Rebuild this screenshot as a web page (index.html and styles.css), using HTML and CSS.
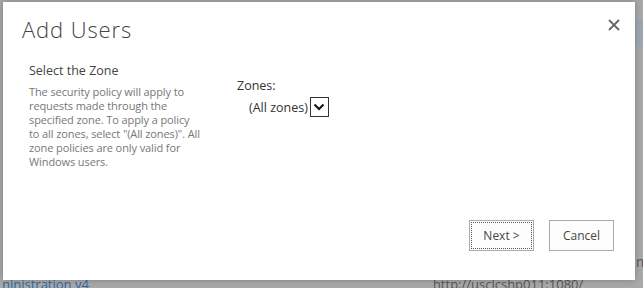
FILE: index.html
```html
<!DOCTYPE html>
<html>
<head>
<meta charset="utf-8">
<link rel="stylesheet" href="styles.css">
</head>
<body>
<div class="page">
  <div class="band"></div>
  <div class="dialog">
    <div class="titlebar">
      <h1 class="title">Add Users</h1>
      <svg class="close" width="12" height="12" viewBox="0 0 12 12"><path d="M1 1L11 11M11 1L1 11" stroke="#666" stroke-width="1.8"/></svg>
    </div>
    <div class="body">
      <div class="section">
        <div class="heading">Select the Zone</div>
        <div class="desc">The security policy will apply to<br>requests made through the<br>specified zone. To apply a policy<br>to all zones, select "(All zones)". All<br>zone policies are only valid for<br>Windows users.</div>
      </div>
      <div class="field">
        <div class="label">Zones:</div>
        <div class="select"><span>(All zones)</span><span class="arrow"><svg width="12" height="8" viewBox="0 0 12 8"><path d="M1.5 1.5L6 6L10.5 1.5" fill="none" stroke="#111" stroke-width="2"/></svg></span></div>
      </div>
    </div>
    <div class="buttons">
      <button class="btn focus">Next &gt;</button>
      <button class="btn">Cancel</button>
    </div>
  </div>
  <div class="under">
    <span class="link">ninistration v4</span>
    <span class="url">http://usclcshp011:1080/</span>
  </div>
  <span class="side">m</span>
</div>
</body>
</html>
```
FILE: styles.css
```css
html, body { margin: 0; padding: 0; }
body {
  width: 643px; height: 288px; overflow: hidden;
  background: #a8a8a8;
  font-family: "Open Sans", "Noto Sans", sans-serif;
}
.page { position: relative; width: 643px; height: 288px; padding-top: 2px; box-sizing: border-box; }
.band { position: absolute; right: 0; top: 20px; width: 8px; height: 26px; background: #9aa7b1; }
.side { position: absolute; left: 636px; top: 252px; font-size: 14px; color: #555; }
.dialog {
  position: relative; z-index: 2;
  margin-left: 3px; width: 632px; height: 278px;
  background: #fff;
  box-shadow: 0 0 6px rgba(0,0,0,0.25);
  display: flex; flex-direction: column;
  box-sizing: border-box;
}
.titlebar { display: flex; justify-content: space-between; align-items: flex-start; padding: 12px 15px 0 19px; height: 44px; box-sizing: border-box; }
.title { margin: 0; font-weight: 300; font-size: 22px; color: #444; line-height: 30px; letter-spacing: 0.9px; }
.close { margin-top: 5px; }
.body { display: flex; padding: 16px 0 0 26px; flex: 1; }
.section { width: 182px; }
.heading { font-size: 12.5px; color: #444; line-height: 17px; }
.desc { margin-top: 6px; font-size: 11px; color: #777; line-height: 14px; white-space: nowrap; letter-spacing: -0.1px; }
.field { margin-left: 26px; padding-top: 15px; }
.label { font-size: 12.5px; color: #333; line-height: 17px; }
.select { display: flex; align-items: center; margin: 3px 0 0 12px; font-size: 12.5px; color: #333; }
.arrow { width: 17px; height: 18px; border: 1px solid #333; margin-left: 2px; display: flex; align-items: center; justify-content: center; background: #fff; }
.buttons { display: flex; justify-content: flex-end; gap: 15px; padding: 0 21px 29px 0; }
.btn {
  width: 65px; height: 31px; background: #fdfdfd; border: 1px solid #ababab;
  font-family: inherit; font-size: 12px; color: #444; padding: 0;
}
.btn.focus { outline: 1px dotted #555; outline-offset: -3px; }
.under { position: relative; z-index: 1; margin-top: -4px; height: 12px; font-size: 13px; line-height: 16px; display: flex; }
.link { color: #2a6aa8; margin-left: 2px; }
.url { color: #555; margin-left: 344px; }
```
